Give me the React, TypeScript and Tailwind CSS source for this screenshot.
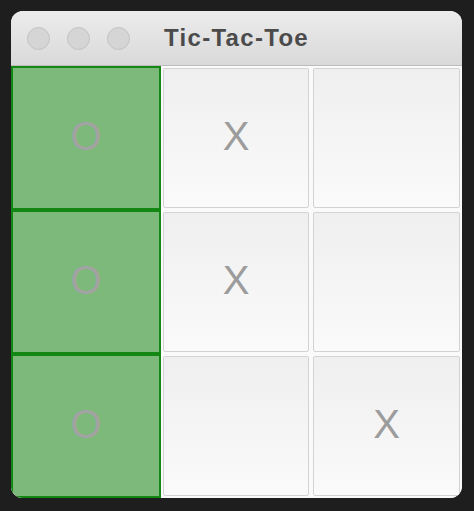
import React from "react";

const board: string[] = ["O", "X", "", "O", "X", "", "O", "", "X"];
const winning = new Set([0, 3, 6]);

export default function App() {
  return (
    <div className="w-[474px] h-[511px] bg-[#1e1e1e] pt-[11px] pl-[11px]">
      <div
        className="w-[451px] h-[487px] rounded-[12px] overflow-hidden bg-[#f4f4f4] flex flex-col"
        style={{ fontFamily: '"Liberation Sans", Arial, sans-serif' }}
      >
        <div className="relative h-[55px] shrink-0 bg-gradient-to-b from-[#ececec] to-[#d9d9d9] border-b border-[#bcbcbc] flex items-center justify-center">
          <div className="absolute left-[16px] top-[16px] flex gap-[17px]">
            <div className="w-[23px] h-[23px] rounded-full bg-[#d5d5d5] border border-[#c3c3c3]" />
            <div className="w-[23px] h-[23px] rounded-full bg-[#d5d5d5] border border-[#c3c3c3]" />
            <div className="w-[23px] h-[23px] rounded-full bg-[#d5d5d5] border border-[#c3c3c3]" />
          </div>
          <span className="text-[24px] font-bold text-[#4b4b4b] tracking-[1.3px] leading-none">
            Tic-Tac-Toe
          </span>
        </div>
        <div className="grid grid-cols-[150px_150px_151px] grid-rows-3 flex-1 bg-[#fafafa]">
          {board.map((v, i) =>
            winning.has(i) ? (
              <div
                key={i}
                className="flex items-center justify-center bg-[#7cb97a] border-2 border-[#138713] pb-[5px]"
              >
                <span className="text-[40px] text-[#a3a3a3] leading-none">{v}</span>
              </div>
            ) : (
              <div key={i} className="p-[2px] flex">
                <div className="flex-1 flex items-center justify-center rounded-[2px] border-[1.5px] border-[#d3d3d3] bg-gradient-to-b from-[#efefef] to-[#fafafa] pb-[5px]">
                  <span className="text-[40px] text-[#9c9c9c] leading-none">{v}</span>
                </div>
              </div>
            )
          )}
        </div>
      </div>
    </div>
  );
}
